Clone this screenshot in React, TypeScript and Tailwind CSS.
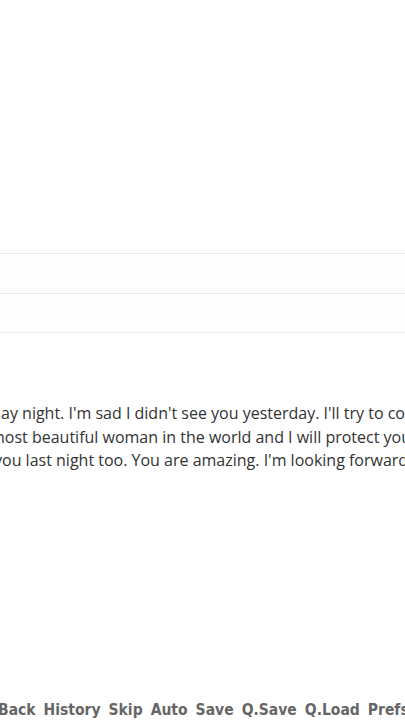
export default function App() {
  const line = "overflow-hidden whitespace-nowrap";
  return (
    <div className="relative w-[405px] h-[720px] bg-white overflow-hidden">
      <div className="h-[253px]" />
      <div className="border-t border-[#ebebeb] h-[40px] bg-[#fdfdfd]" />
      <div className="border-t border-[#ebebeb] h-[39px] bg-[#fdfdfd]" />
      <div className="border-t border-[#ebebeb] h-[70px]" />
      <div
        className="flex flex-col text-[16px] leading-[23.5px] text-[#333333]"
        style={{ fontFamily: '"Open Sans", sans-serif' }}
      >
        <div className={line}>
          <span className="ml-[1px]">ay night. I'm sad I didn't see you yesterday. I'll try to come</span>
        </div>
        <div className={line}>
          <span className="ml-[-10px]">most beautiful woman in the world and I will protect you</span>
        </div>
        <div className={line}>
          <span className="ml-[-6px]">you last night too. You are amazing. I'm looking forward</span>
        </div>
      </div>
      <div
        className="absolute left-0 right-0 bottom-[-2px] flex gap-[8px] whitespace-nowrap text-[15.5px] font-bold font-stretch-condensed text-[#666666] ml-[-2px]"
        style={{ fontFamily: '"DejaVu Sans", sans-serif' }}
      >
        <span>Back</span>
        <span>History</span>
        <span>Skip</span>
        <span>Auto</span>
        <span>Save</span>
        <span>Q.Save</span>
        <span>Q.Load</span>
        <span>Prefs</span>
      </div>
    </div>
  );
}
